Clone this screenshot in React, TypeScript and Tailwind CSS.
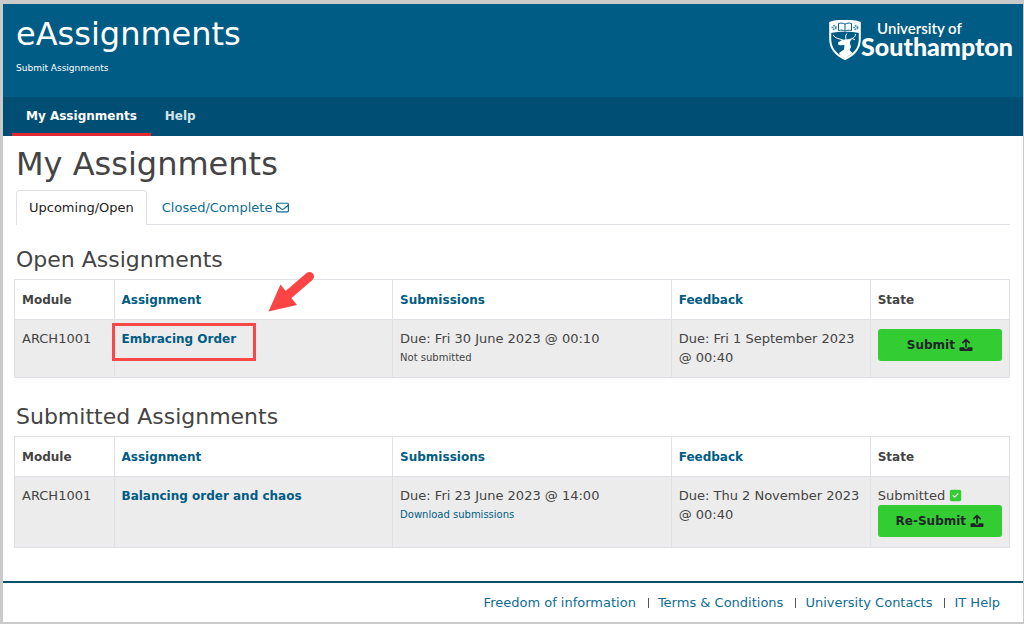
import type { ReactNode } from 'react';
import { FaRegEnvelope, FaSquareCheck } from 'react-icons/fa6';

const columns = [
  { label: 'Module', width: 'w-[10%]', sortable: false },
  { label: 'Assignment', width: 'w-[28%]', sortable: true },
  { label: 'Submissions', width: 'w-[28%]', sortable: true },
  { label: 'Feedback', width: 'w-[20%]', sortable: true },
  { label: 'State', width: 'w-[14%]', sortable: false },
];

const footerLinks = [
  'Freedom of information',
  'Terms & Conditions',
  'University Contacts',
  'IT Help',
];

const Crest = () => (
  <svg viewBox="0 0 32 40" className="h-10 w-8" aria-hidden="true">
    {/* Shield */}
    <path
      d="M1.2 2.6C6 1 11 .8 16 .8s10 .2 14.8 1.8V19c0 9.5-6 16-14.8 20C7.2 35 1.2 28.5 1.2 19Z"
      fill="#005c84"
      stroke="#fff"
      strokeWidth="2"
    />
    <path d="M1.5 2.8C6 1.3 11 1 16 1s10 .3 14.500 1.800V13C26 12 21 11.700 16 11.700S6 12 1.500 13Z" fill="#fff" />
    {/* Book */}
    <path
      d="M9.5 3.5c2.5-.7 4.7-.5 6.5.7 1.8-1.2 4-1.4 6.5-.7v7c-2.5-.6-4.7-.4-6.5.6-1.8-1-4-1.2-6.5-.6ZM16 4.2v7"
      fill="#fff"
      stroke="#005c84"
      strokeWidth="1"
    />
    {/* Roses */}
    {[5.2, 26.8].map((cx) => (
      <circle
        key={cx}
        cx={cx}
        cy="7.5"
        r="1.7"
        fill="none"
        stroke="#005c84"
        strokeWidth="2"
        strokeDasharray="1.4 .7"
        opacity=".7"
      />
    ))}
    {/* Stag */}
    <path
      d="M4.5 15.5c1.5 3 5 3 9.5 4.5M17 20c0-2-1-4 .5-6M20 19.5c3-.5 6-1.5 6.5-5M23 18.5l2.5 1"
      fill="none"
      stroke="#fff"
      strokeWidth="1"
      strokeLinecap="round"
    />
    <path
      d="M9 22.5l4-2.5 3-.5 6.5-.5-1.7 3.5 1.2 4.5-1.5 3 3 3-7.5 5.5-4.5-3-1.5-2.500 5-3.500.5-4.500-3.500.3-2.500-.3Z"
      fill="#fff"
    />
  </svg>
);

const UniversityLogo = () => (
  <a
    href="#"
    aria-label="University of Southampton"
    className="flex font-['Lato',sans-serif] text-white"
  >
    <Crest />
    <span className="flex flex-col">
      <span className="pl-4 text-[15px] leading-4 font-semibold">University of</span>
      <span className="text-[25px] leading-5 font-black">Southampton</span>
    </span>
  </a>
);

const UploadIcon = () => (
  <svg viewBox="0 0 14 14" className="size-[14px]" aria-hidden="true">
    <path
      d="M7 9V2M3.8 4.600L7 1.500l3.200 3.100"
      fill="none"
      stroke="currentColor"
      strokeWidth="1.700"
      strokeLinecap="round"
      strokeLinejoin="round"
    />
    <path d="M1.500 9.200h3.600c.2 1 1 1.500 1.900 1.500s1.700-.5 1.900-1.500h3.600c.6 0 1 .4 1 1v1.800c0 .6-.4 1-1 1h-11c-.6 0-1-.4-1-1v-1.800c0-.6.4-1 1-1Z" fill="currentColor" />
  </svg>
);

const AssignmentTable = ({ children }: { children: ReactNode }) => (
  <table className="w-full table-fixed border-collapse text-left">
    <thead>
      <tr>
        {columns.map((col) => (
          <th
            key={col.label}
            scope="col"
            className={`${col.width} border border-[#dee2e6] px-[7px] pt-[11px] pb-[9px] text-[12px] leading-[19px] font-bold`}
          >
            {col.sortable ? (
              <a href="#" className="text-[#005c84]">
                {col.label}
              </a>
            ) : (
              col.label
            )}
          </th>
        ))}
      </tr>
    </thead>
    <tbody>
      <tr className="bg-[#ececec]">{children}</tr>
    </tbody>
  </table>
);

const Cell = ({ children }: { children: ReactNode }) => (
  <td className="border border-[#dee2e6] px-[7px] pt-[9px] pb-[10px] align-top">{children}</td>
);

const SubmitButton = ({ label }: { label: string }) => (
  <button
    type="button"
    className="flex h-8 w-full items-center justify-center gap-1 rounded-[3px] bg-[#33cc33] text-[12px] font-bold text-[#212529]"
  >
    {label}
    <UploadIcon />
  </button>
);

const App = () => {
  return (
    <div className="min-h-screen bg-[#cacaca] pt-1 pr-px pb-[2px] pl-[3px] font-['DejaVu_Sans',sans-serif] text-[13px] leading-[19px] text-[#444444]">
      <div className="bg-white">
        <header className="bg-[#005c84] text-white">
          <div className="flex justify-between pr-[10px] pb-[23px] pl-[13px]">
            <div>
              <p className="pt-[11px] text-[32px] leading-[38px]">eAssignments</p>
              <p className="pt-[9px] text-[9px] leading-3">Submit Assignments</p>
            </div>
            <div className="pt-4">
              <UniversityLogo />
            </div>
          </div>
          <nav className="flex bg-[#004e73] pl-[9px] text-[12px] leading-[19px] font-bold">
            <a href="#" className="border-b-[3px] border-[#e1292f] px-[14px] pt-[10px] pb-[7px]">
              My Assignments
            </a>
            <a href="#" className="px-[14px] pt-[10px] pb-[10px] text-[#d5e3ea]">
              Help
            </a>
          </nav>
        </header>

        <main className="pr-[13px] pb-[33px] pl-[11px]">
          <h1 className="pt-2 pl-[2px] text-[32px] leading-10">My Assignments</h1>

          {/* Tabs */}
          <div className="mt-[6px] ml-[2px] flex border-b border-[#dee2e6]">
            <a
              href="#"
              className="-mb-px rounded-t-[4px] border border-b-0 border-[#dee2e6] bg-white px-3 pt-[7px] pb-2 text-[#222222]"
            >
              Upcoming/Open
            </a>
            <a href="#" className="flex items-center gap-1 px-[15px] text-[#0d6d95]">
              Closed/Complete
              <FaRegEnvelope />
            </a>
          </div>

          <section className="pt-[22px]">
            <h2 className="mb-[6px] pl-[2px] text-[22px] leading-[26px]">Open Assignments</h2>
            <AssignmentTable>
              <Cell>ARCH1001</Cell>
              <Cell>
                <span className="relative inline-block text-[12px] leading-[19px]">
                  <a href="#" className="font-bold text-[#005c84]">
                    Embracing Order
                  </a>
                  {/* Highlight box and pointer */}
                  <span className="pointer-events-none absolute -top-[7px] -right-5 -left-[10px] h-[38px] border-[3px] border-[#f84848]" />
                  <svg
                    viewBox="0 0 46 42"
                    className="pointer-events-none absolute -top-[59px] left-full ml-8 h-[42px] w-[46px]"
                    aria-hidden="true"
                  >
                    <path d="M41.5 5.5L20 24" stroke="#fc4444" strokeWidth="9" strokeLinecap="round" />
                    <path d="M.5 40.5L12.5 13.5 29 34Z" fill="#fc4444" />
                  </svg>
                </span>
              </Cell>
              <Cell>
                <p>Due: Fri 30 June 2023 @ 00:10</p>
                <p className="text-[10px] leading-[19px]">Not submitted</p>
              </Cell>
              <Cell>Due: Fri 1 September 2023 @ 00:40</Cell>
              <Cell>
                <SubmitButton label="Submit" />
              </Cell>
            </AssignmentTable>
          </section>

          <section className="pt-[26px]">
            <h2 className="mb-[6px] pl-[2px] text-[22px] leading-[26px]">Submitted Assignments</h2>
            <AssignmentTable>
              <Cell>ARCH1001</Cell>
              <Cell>
                <a href="#" className="text-[12px] leading-[19px] font-bold text-[#005c84]">
                  Balancing order and chaos
                </a>
              </Cell>
              <Cell>
                <p>Due: Fri 23 June 2023 @ 14:00</p>
                <a href="#" className="block text-[10px] leading-[19px] text-[#005c84]">
                  Download submissions
                </a>
              </Cell>
              <Cell>Due: Thu 2 November 2023 @ 00:40</Cell>
              <Cell>
                <p className="flex items-center gap-1">
                  Submitted
                  <FaSquareCheck className="text-[#33cc33]" />
                </p>
                <SubmitButton label="Re-Submit" />
              </Cell>
            </AssignmentTable>
          </section>
        </main>

        <footer className="border-t-2 border-[#0b4f68] pt-[10px] pr-[23px] pb-[10px]">
          <ul className="flex justify-end text-[#0d6d95]">
            {footerLinks.map((link, index) => (
              <li key={link} className="flex items-center">
                {index > 0 && <span className="mr-[9px] ml-3 h-[10px] w-px bg-[#555555]" />}
                <a href="#">{link}</a>
              </li>
            ))}
          </ul>
        </footer>
      </div>
    </div>
  );
};

export default App;
